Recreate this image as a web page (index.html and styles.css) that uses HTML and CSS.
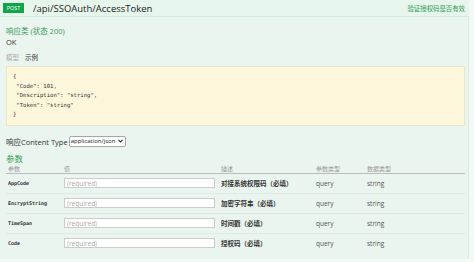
FILE: index.html
```html
<!DOCTYPE html>
<html lang="zh-CN">
<head>
    <meta charset="UTF-8">
    <title>SSOAuth</title>
    <link rel="stylesheet" href="styles.css">
</head>
<body>
    <div class="operation">
        <div class="heading">
            <span class="method">POST</span>
            <span class="path">/api/SSOAuth/AccessToken</span>
            <span class="summary">验证授权码是否有效</span>
        </div>
        <div class="content">
            <h4 class="title">响应类 (状态 200)</h4>
            <p class="status">OK</p>
            <div class="tabs">
                <span class="tab muted">模型</span>
                <span class="tab">示例</span>
            </div>
            <pre class="snippet">{
 "Code": 101,
 "Description": "string",
 "Token": "string"
}</pre>
            <div class="content-type">
                <label>响应Content Type</label>
                <span class="select-box">
                    <select class="type-select">
                        <option>application/json</option>
                    </select>
                    <svg class="caret" width="5" height="4" viewBox="0 0 5 4"><path d="M0.5 0.8 L2.5 3 L4.5 0.8" fill="none" stroke="#222" stroke-width="1.1"/></svg>
                </span>
            </div>
            <h4 class="title params-title">参数</h4>
            <table class="params">
                <thead>
                    <tr>
                        <th class="col-name">参数</th>
                        <th class="col-value">值</th>
                        <th class="col-desc">描述</th>
                        <th class="col-in">参数类型</th>
                        <th>数据类型</th>
                    </tr>
                </thead>
                <tbody>
                    <tr>
                        <td class="code">AppCode</td>
                        <td><input class="param-input" placeholder="(required)"></td>
                        <td class="desc">对接系统权限码（必填）</td>
                        <td>query</td>
                        <td>string</td>
                    </tr>
                    <tr>
                        <td class="code">EncryptString</td>
                        <td><input class="param-input" placeholder="(required)"></td>
                        <td class="desc">加密字符串（必填）</td>
                        <td>query</td>
                        <td>string</td>
                    </tr>
                    <tr>
                        <td class="code">TimeSpan</td>
                        <td><input class="param-input" placeholder="(required)"></td>
                        <td class="desc">时间戳（必填）</td>
                        <td>query</td>
                        <td>string</td>
                    </tr>
                    <tr>
                        <td class="code">Code</td>
                        <td><input class="param-input" placeholder="(required)"></td>
                        <td class="desc">授权码（必填）</td>
                        <td>query</td>
                        <td>string</td>
                    </tr>
                </tbody>
            </table>
        </div>
    </div>
</body>
</html>
```

FILE: styles.css
```css
body {
    margin: 0;
    background-color: #f3faf6;
    font-family: "Open Sans", "Noto Sans CJK SC", sans-serif;
    font-size: 7px;
    color: #333;
}
.operation {
    width: 469px;
}
/* Pasek nagłówka operacji */
.heading {
    display: flex;
    align-items: center;
    height: 16px;
    background-color: #e7f6ec;
    border-bottom: 1px solid #d3eedc;
    padding: 0 4px 0 3px;
}
.method {
    background-color: #10a54a;
    color: white;
    font-size: 5.5px;
    width: 21px;
    height: 10px;
    line-height: 10px;
    text-align: center;
}
.path {
    margin-left: 9px;
    font-size: 9.5px;
    color: #222;
}
.summary {
    margin-left: auto;
    color: #2f9a57;
    font-size: 6.4px;
}
.content {
    background-color: #ebf5ef;
    border-right: 1px solid #d6ece0;
    padding: 9px 3px 6px 6px;
}
.title {
    margin: 0;
    font-weight: normal;
    color: #3a9a58;
    font-size: 7.5px;
    line-height: 10px;
}
.status {
    margin: 1px 0 0;
    font-size: 7.5px;
    line-height: 10px;
}
.tabs {
    margin-top: 5px;
    display: flex;
    gap: 6px;
    font-size: 6.5px;
}
.tab.muted {
    color: #aaa;
}
.snippet {
    margin: 4px 0 0;
    background-color: #fcf6db;
    border: 1px solid #ece6c8;
    padding: 5px 6px;
    font-family: "DejaVu Sans Mono", monospace;
    font-size: 5.6px;
    line-height: 9.5px;
    color: #333;
}
.content-type {
    margin-top: 10px;
    display: flex;
    align-items: center;
    gap: 1px;
    font-size: 7.5px;
}
/* Własna ramka listy wyboru ze strzałką */
.select-box {
    display: flex;
    align-items: center;
    width: 57px;
    height: 11px;
    box-sizing: border-box;
    border: 1px solid #a6a6a6;
    border-radius: 2px;
    background-color: white;
    padding: 0 2px 0 1px;
}
.type-select {
    appearance: none;
    -webkit-appearance: none;
    border: none;
    background: transparent;
    padding: 0;
    margin: 0;
    font-family: "Open Sans", sans-serif;
    font-size: 6px;
    color: #222;
    width: 47px;
    height: 9px;
    line-height: 9px;
}
.caret {
    margin-left: auto;
}
.params-title {
    margin-top: 7px;
    font-size: 8.5px;
}
/* Tabela parametrów */
.params {
    width: 100%;
    border-collapse: collapse;
    margin-top: 0;
}
.params th {
    text-align: left;
    font-weight: normal;
    color: #999;
    font-size: 6px;
    line-height: 8px;
    padding: 1px 0 0 2px;
    border-bottom: 1px solid #bbb;
}
.params td {
    padding: 0 0 0 2px;
    height: 19px;
    border-bottom: 1px solid #dfe8e3;
    font-size: 6.5px;
    color: #555;
}
.params tr:last-child td {
    border-bottom: none;
}
.col-name {
    width: 54px;
}
.col-value {
    width: 155px;
}
.col-desc {
    width: 93px;
}
.col-in {
    width: 49px;
}
.params td.code {
    font-family: "DejaVu Sans Mono", monospace;
    font-weight: bold;
    font-size: 5px;
    color: #333;
}
.params td.desc {
    font-weight: bold;
    color: #333;
}
.param-input {
    box-sizing: border-box;
    width: 151px;
    height: 10px;
    border: 1px solid #ccc;
    padding: 0 2px;
    font-family: "Open Sans", sans-serif;
    font-size: 6.5px;
    display: block;
}
.param-input::placeholder {
    color: #aaa;
}
```
